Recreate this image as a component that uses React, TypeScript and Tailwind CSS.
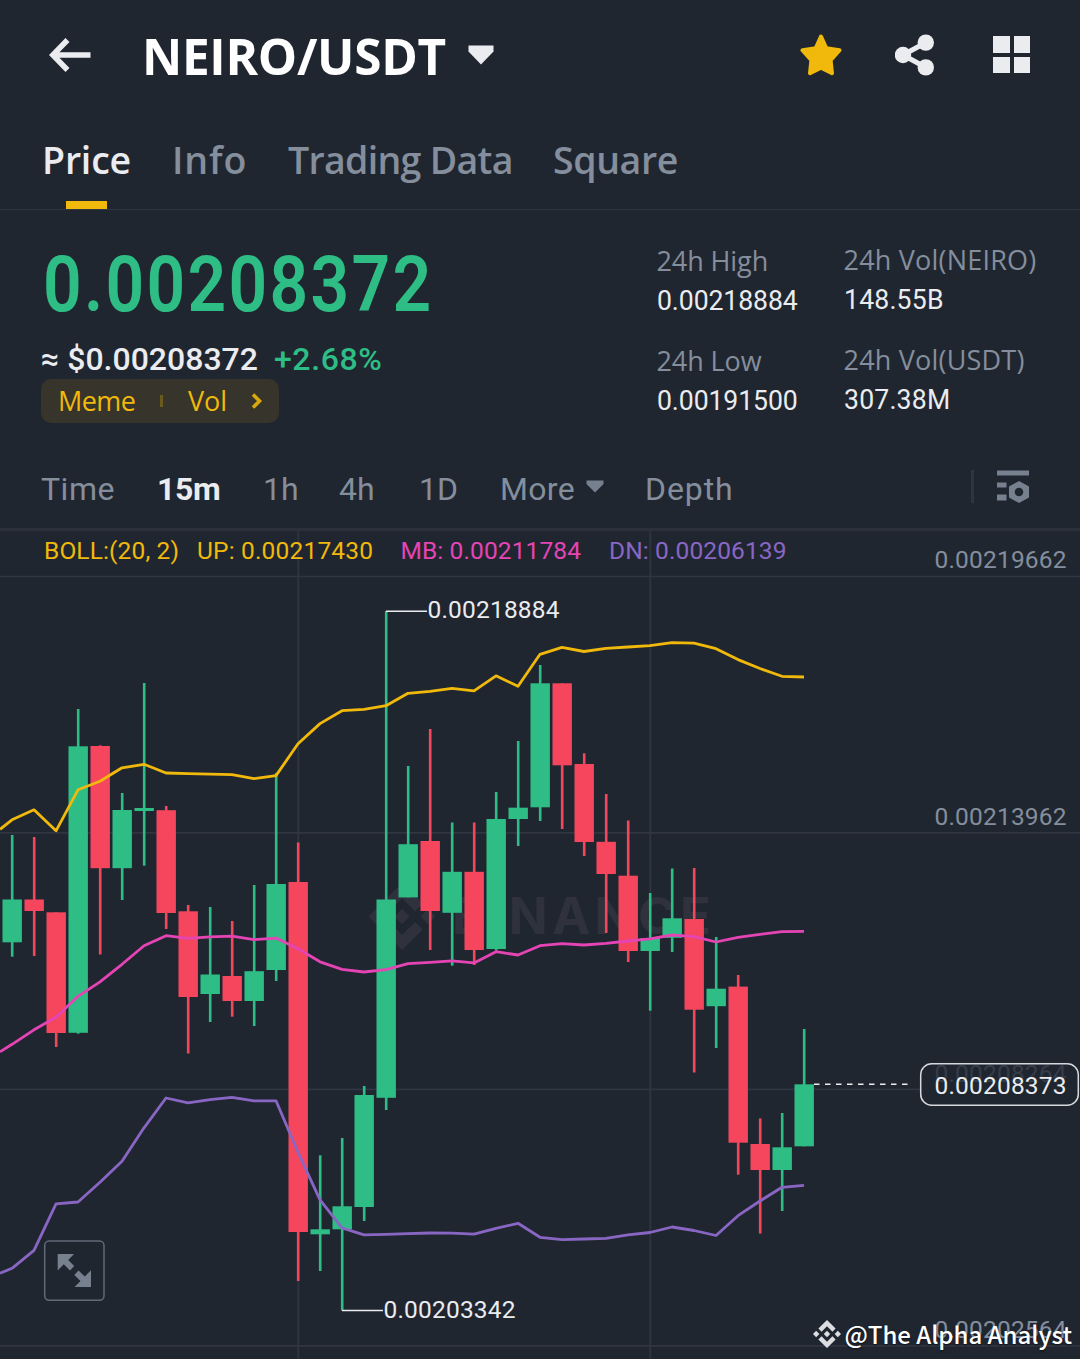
import type { ReactNode } from "react";

type Candle = {
  up: boolean;
  high: number;
  top: number;
  bottom: number;
  low: number;
};

const STEP = 22;
const FIRST_X = 12;

const GREEN = "#2ebd85";
const RED = "#f6465d";

function candle(
  side: "g" | "r",
  high: number,
  top: number,
  bottom: number,
  low: number,
): Candle {
  return { up: side === "g", high, top, bottom, low };
}

const candles: Candle[] = [
  candle("g", 835, 899.5, 942.3, 956.7),
  candle("r", 837, 899.5, 911, 956),
  candle("r", 912.3, 912.3, 1033, 1047),
  candle("g", 709, 746.3, 1032.8, 1033.7),
  candle("r", 745.3, 746, 868.2, 954.5),
  candle("g", 793, 810, 868.2, 900),
  candle("g", 683, 808, 811, 865.7),
  candle("r", 806, 810.2, 913, 929),
  candle("r", 905, 911.3, 997, 1053.5),
  candle("g", 907, 974.5, 994, 1022),
  candle("r", 921, 976, 1001, 1016.7),
  candle("g", 885, 971.2, 1001, 1026),
  candle("g", 773, 884, 970, 981),
  candle("r", 842.5, 882, 1232, 1281),
  candle("g", 1155.3, 1229.3, 1234.3, 1271),
  candle("g", 1138, 1206.3, 1229.3, 1310.5),
  candle("g", 1086, 1095, 1207, 1221),
  candle("g", 611, 899.5, 1097.8, 1110),
  candle("g", 766, 844.2, 897.4, 897.4),
  candle("r", 729, 841, 911, 950),
  candle("g", 822.5, 871.8, 912.8, 965.7),
  candle("r", 822.5, 871.8, 950, 965),
  candle("g", 792, 819, 949, 950.5),
  candle("g", 741, 807.7, 819, 846),
  candle("g", 665, 683.3, 807.3, 821),
  candle("r", 683.3, 683.3, 765.3, 829),
  candle("r", 753.3, 764, 842, 856),
  candle("r", 794, 841.8, 874, 933),
  candle("r", 820.5, 875.7, 951, 962),
  candle("g", 893, 938, 951, 1010.7),
  candle("g", 868.5, 918.3, 937.8, 952),
  candle("r", 868, 919, 1009.7, 1072.5),
  candle("g", 937, 988.7, 1006.2, 1048),
  candle("r", 975, 986.6, 1142.7, 1174.7),
  candle("r", 1118.5, 1144, 1170, 1233.5),
  candle("g", 1113, 1147.3, 1170, 1211),
  candle("g", 1029, 1084.3, 1146.3, 1146.3),
];

// The first value of each band sits on the left edge, the rest on the candles.
const upper = [
  829, 819.5, 809.5, 830.5, 789.5, 781, 767.5, 764, 772.7, 773.4, 773.8, 774.4,
  778.3, 775.3, 743.5, 723.3, 710.4, 709, 705.4, 693, 691, 688, 690.6, 675.5,
  686, 654, 647, 651.2, 648, 646.7, 645.3, 642.3, 642.8, 648.4, 659.3, 668.2,
  676, 676.7,
];

const middle = [
  1051.5, 1044, 1029.5, 1017, 996, 981.5, 964, 945.4, 935.4, 938, 936.6, 935.8,
  939.3, 937.8, 948.5, 961.5, 969, 971.7, 969.4, 963.4, 962, 960.6, 962.6,
  951.4, 954.7, 945.4, 943.3, 944.7, 943, 940.7, 938.6, 934.7, 936.4, 941.7,
  937, 934, 931.4, 931,
];

const lower = [
  1273, 1268, 1250, 1203.5, 1201.7, 1182, 1161, 1127.5, 1097.7, 1102.6, 1099.4,
  1097, 1100.5, 1100.5, 1152, 1199.5, 1227.5, 1234.5, 1234, 1233.4, 1232.7,
  1232.8, 1233.8, 1228, 1223, 1237, 1239.4, 1238.7, 1238, 1234.6, 1232.2,
  1226.7, 1230.2, 1235.2, 1215.4, 1200.7, 1187, 1185,
];

function bandPoints(values: number[]) {
  return values
    .map((y, i) => `${i === 0 ? 0 : FIRST_X + (i - 1) * STEP},${y}`)
    .join(" ");
}

function BinanceMark({ className }: { className?: string }) {
  return (
    <svg viewBox="0 0 126.6 126.6" className={className} fill="currentColor">
      <BinanceShape />
    </svg>
  );
}

function BinanceShape() {
  return (
    <>
      <path d="M38.7 53.2 63.3 28.6 87.9 53.2 102.2 38.9 63.3 0 24.4 38.9z" />
      <path d="M0 63.3 14.3 49 28.6 63.3 14.3 77.6z" />
      <path d="M38.7 73.4 63.3 98 87.9 73.4 102.2 87.7 63.3 126.6 24.4 87.7z" />
      <path d="M98 63.3 112.3 49 126.6 63.3 112.3 77.6z" />
      <path d="M77.8 63.3 63.3 48.8 48.8 63.3 63.3 77.8z" />
    </>
  );
}

function Header() {
  return (
    <header className="flex h-[109px] items-center pr-[50px] pl-[49px]">
      <svg
        viewBox="0 0 42 34"
        className="h-[34px] w-[42px]"
        fill="none"
        stroke="#eaecef"
        strokeWidth="5.6"
      >
        <path d="M18.5 2 3.8 17 18.5 32M4 17H41.5" />
      </svg>
      <h1 className="mt-[3px] ml-[51px] w-[303px] font-['Open_Sans'] text-[49.5px] leading-[60px] font-bold tracking-[-0.3px] whitespace-nowrap text-white">
        NEIRO/USDT
      </h1>
      <svg
        viewBox="0 0 26 20"
        className="ml-[23px] h-5 w-[26px]"
        fill="#eaecef"
      >
        <path d="M.5.5h25v6L13 19.5.5 6.5z" />
      </svg>
      <div className="ml-auto flex items-center">
        <svg
          viewBox="0 0 42 42"
          className="h-[42px] w-[42px]"
          fill="#f0b90b"
          stroke="#f0b90b"
          strokeWidth="4"
          strokeLinejoin="round"
        >
          <path d="M21 2.5 26.3 14.3 39.5 16.2 30.6 26.3 32 39.2 21 33.8 10 39.2 11.4 26.3 2.5 16.2 15.7 14.3z" />
        </svg>
        <svg
          viewBox="0 0 40 42"
          className="ml-[53px] h-[42px] w-10"
          fill="#eaecef"
        >
          <path d="M8 21 31 8.5M8 21 31 33.5" stroke="#eaecef" strokeWidth="5" />
          <circle cx="8" cy="21" r="8.2" />
          <circle cx="30.8" cy="8.6" r="8.2" />
          <circle cx="30.8" cy="33.4" r="8.2" />
        </svg>
        <div className="ml-[58px] grid grid-cols-2 gap-1">
          <span className="h-[16.5px] w-[16.5px] bg-[#eaecef]" />
          <span className="h-[16.5px] w-[16.5px] bg-[#eaecef]" />
          <span className="h-[16.5px] w-[16.5px] bg-[#eaecef]" />
          <span className="h-[16.5px] w-[16.5px] bg-[#eaecef]" />
        </div>
      </div>
    </header>
  );
}

function Tabs() {
  return (
    <nav className="flex h-[101px] border-b border-[#2f3640] pl-[43px] font-['Open_Sans'] text-[37.5px] leading-[101px] font-semibold tracking-[-0.7px] whitespace-nowrap text-[#848e9c]">
      <div className="flex w-[87px] flex-col items-center tracking-[-0.2px] text-[#eaecef]">
        <span className="h-[92px]">Price</span>
        <span className="h-2 w-[41px] bg-[#f0b90b]" />
      </div>
      <span className="ml-[42px] w-[74px] tracking-[0.9px]">Info</span>
      <span className="ml-[42px] w-[223px]">Trading Data</span>
      <span className="ml-[42px] tracking-[-0.4px]">Square</span>
    </nav>
  );
}

function Stat({ label, value }: { label: string; value: string }) {
  return (
    <div className="h-[100px] whitespace-nowrap">
      <div className="font-['Open_Sans'] text-[27px] leading-10 text-[#848e9c]">
        {label}
      </div>
      <div className="origin-left scale-x-[0.95] text-[28px] leading-10 text-[#eaecef]">
        {value}
      </div>
    </div>
  );
}

function Summary() {
  return (
    <section className="flex h-[240px] pl-[41px]">
      <div className="w-[615.5px]">
        <div className="mt-[35px] ml-[2px] h-[80px] origin-left scale-x-[0.88] text-[77px] leading-[80px] font-semibold tracking-[2.6px] text-[#2ebd85]">
          0.00208372
        </div>
        <div className="mt-[14px] flex h-10 text-[32px] leading-10 font-medium whitespace-nowrap">
          <span className="w-[233px] text-[#eaecef]">≈ $0.00208372</span>
          <span className="tracking-[0.6px] text-[#2ebd85]">+2.68%</span>
        </div>
        <div className="flex h-11 w-[238px] items-center rounded-[10px] bg-[#36342b] pl-[17px] font-['Open_Sans'] text-[27px] text-[#f0b90b]">
          <span className="w-[77px] tracking-[-0.6px]">Meme</span>
          <span className="ml-[25px] h-3 w-[3px] bg-[#6b591d]" />
          <span className="ml-[25px] w-[41px]">Vol</span>
          <svg
            viewBox="0 0 12 16"
            className="ml-[22px] h-4 w-3"
            fill="none"
            stroke="#d9a90f"
            strokeWidth="3.6"
          >
            <path d="M2 1.5 8.5 8 2 14.5" />
          </svg>
        </div>
      </div>
      <div className="mt-[31px] w-[187px] tracking-[-0.1px]">
        <Stat label="24h High" value="0.00218884" />
        <Stat label="24h Low" value="0.00191500" />
      </div>
      <div className="mt-[30px] tracking-[0.2px]">
        <Stat label="24h Vol(NEIRO)" value="148.55B" />
        <Stat label="24h Vol(USDT)" value="307.38M" />
      </div>
    </section>
  );
}

function Period({ className, children }: { className: string; children: ReactNode }) {
  return <span className={className}>{children}</span>;
}

function Periods() {
  return (
    <div className="flex h-[81px] items-center border-b-[3px] border-[#2b303b] pl-[41px] text-[32px] whitespace-nowrap text-[#848e9c]">
      <Period className="w-[116px] tracking-[0.5px]">Time</Period>
      <Period className="w-[106px] font-bold tracking-[-0.3px] text-[#eaecef]">15m</Period>
      <Period className="w-[76px]">1h</Period>
      <Period className="w-[80px]">4h</Period>
      <Period className="w-[81px]">1D</Period>
      <Period className="w-[86px] tracking-[0.3px]">More</Period>
      <svg viewBox="0 0 18 13" className="mt-[-6px] h-[13px] w-[18px]" fill="#76808f">
        <path d="M.5.5h17v3.5L9 12.5.5 4z" />
      </svg>
      <Period className="ml-[41px] tracking-[0.9px]">Depth</Period>
      <span className="mt-[-5px] ml-auto h-[33px] w-[3px] bg-[#2f3540]" />
      <svg
        viewBox="0 0 34 34"
        className="mt-[-6px] mr-[50px] ml-[22px] h-[34px] w-[34px]"
        fill="#76808f"
      >
        <path d="M1 1.5h32v5H1zM1 13.5h9.5v5H1zM1 25.5h9.5v6H1z" />
        <path
          fillRule="evenodd"
          d="M23 12 33 17.5v11L23 34 13 28.5v-11zM23 18.7a4.3 4.3 0 1 0 0 8.600 4.300 4.300 0 0 0 0-8.600z"
        />
      </svg>
    </div>
  );
}

function Chart() {
  return (
    <svg
      viewBox="0 531 1080 828"
      className="block h-[828px] w-[1080px] font-[Roboto] text-[24.5px]"
    >
      <g stroke="#2f3541" strokeWidth="1.7">
        {[576.5, 832.8, 1089.3, 1345.8].map((y) => (
          <path key={y} d={`M0 ${y}H1080`} />
        ))}
        <path d="M298.3 531V1359M650.3 531V1359" />
      </g>

      <g fill="#2f323d">
        <g transform="translate(368.5 883) scale(0.53)">
          <BinanceShape />
        </g>
        <text x="452" y="934" textLength="259" className="font-[Inter] text-[51px] font-bold">
          BINANCE
        </text>
      </g>

      {candles.map((c, i) => {
        const x = FIRST_X + i * STEP;
        return (
          <g key={x} fill={c.up ? GREEN : RED}>
            <rect x={x - 1.1} y={c.high} width="2.6" height={c.low - c.high} />
            <rect x={x - 9.5} y={c.top} width="19.4" height={c.bottom - c.top} />
          </g>
        );
      })}

      <g fill="none" strokeWidth="2.8" strokeLinejoin="round" transform="translate(0 0.3)">
        <polyline points={bandPoints(upper)} stroke="#f0b90b" />
        <polyline points={bandPoints(middle)} stroke="#e544b5" />
        <polyline points={bandPoints(lower)} stroke="#8a66c4" />
      </g>

      <text x="44" y="559" textLength="135" fill="#f0b90b">BOLL:(20, 2)</text>
      <text x="197" y="559" textLength="176" fill="#f0b90b">UP: 0.00217430</text>
      <text x="400.5" y="559" textLength="180.5" fill="#e544b5">MB: 0.00211784</text>
      <text x="609" y="559" textLength="177.5" fill="#8a66c4">DN: 0.00206139</text>

      <g fill="#eaecef">
        <path d="M386 611.3H427M342 1310.5H383" stroke="#eaecef" strokeWidth="1.5" />
        <text x="427.5" y="618" textLength="132">0.00218884</text>
        <text x="383.5" y="1318" textLength="132">0.00203342</text>
      </g>

      <g fill="#848e9c">
        <text x="934.5" y="568" textLength="132">0.00219662</text>
        <text x="934.5" y="825" textLength="132">0.00213962</text>
        <text x="934.5" y="1338" textLength="132">0.00202564</text>
      </g>

      <path
        d="M814 1084.3H908"
        stroke="#eaecef"
        strokeWidth="1.5"
        strokeDasharray="5.5 5.5"
      />
      <rect
        x="920.7"
        y="1063.7"
        width="157.6"
        height="41.5"
        rx="11"
        fill="#202630"
        stroke="#d5d8dd"
        strokeWidth="1.5"
      />
      <text x="934.5" y="1081.5" textLength="132" fill="#363c48">0.00208264</text>
      <text x="934.5" y="1094" textLength="132" fill="#eaecef">0.00208373</text>

      <rect
        x="44.7"
        y="1241"
        width="59.3"
        height="59.3"
        rx="4.5"
        fill="#202630"
        stroke="#626a77"
        strokeWidth="1.5"
      />
      <g fill="#76808f">
        <path d="M57.7 1254H74L68.2 1260 74.2 1266 70 1270.5 63.8 1264.3 57.7 1270.5z" />
        <path d="M91 1287H74.5L80.5 1281 74.3 1275 78.5 1270.5 84.8 1276.5 91 1270.3z" />
      </g>
    </svg>
  );
}

function Credit() {
  return (
    <div className="absolute right-[8px] bottom-[5px] flex items-center whitespace-nowrap text-white">
      <BinanceMark className="h-7 w-7 text-[#dcdee2]" />
      <span className="ml-[3px] font-['Noto_Sans_CJK_SC',sans-serif] text-[24px] leading-10 font-medium [text-shadow:0_1px_2px_rgba(0,0,0,0.6)]">
        @The Alpha Analyst
      </span>
    </div>
  );
}

export default function App() {
  return (
    <main className="relative h-[1359px] w-[1080px] overflow-hidden bg-[#202630] font-[Roboto,sans-serif]">
      <Header />
      <Tabs />
      <Summary />
      <Periods />
      <Chart />
      <Credit />
    </main>
  );
}
